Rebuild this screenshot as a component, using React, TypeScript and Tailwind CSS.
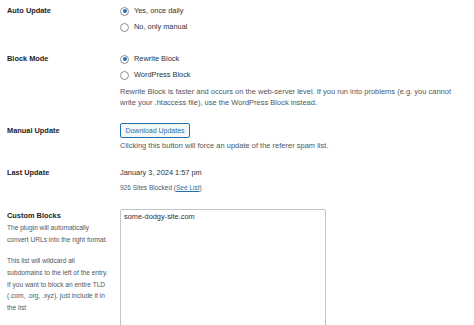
import React from "react";

const font = { fontFamily: '"Liberation Sans", Arial, sans-serif' };

function Radio({ label, checked }: { label: string; checked?: boolean }) {
  return (
    <label className="flex h-[16px] items-center gap-[5px] text-[7.4px] text-[#2c3338]">
      <span className="flex h-[9px] w-[9px] items-center justify-center rounded-full border border-[#8c8f94] bg-white">
        {checked && <span className="h-[4px] w-[4px] rounded-full bg-[#2271b1]" />}
      </span>
      {label}
    </label>
  );
}

function Row({
  label,
  children,
  className,
}: {
  label: React.ReactNode;
  children: React.ReactNode;
  className?: string;
}) {
  return (
    <div className={"flex text-[7.4px] " + (className ?? "")}>
      <div className="w-[120px] shrink-0 pl-[7px] pr-[10px]">{label}</div>
      <div className="w-[338px]">{children}</div>
    </div>
  );
}

const labelCls = "text-[7.4px] font-bold text-[#1d2327]";

export default function App() {
  return (
    <div className="h-[325px] w-[474px] overflow-hidden bg-white" style={font}>
      <Row className="pt-[3px]" label={<div className={"h-[16px] leading-[16px] " + labelCls}>Auto Update</div>}>
        <Radio label="Yes, once daily" checked />
        <Radio label="No, only manual" />
      </Row>

      <Row className="pt-[16px]" label={<div className={"h-[16px] leading-[16px] " + labelCls}>Block Mode</div>}>
        <Radio label="Rewrite Block" checked />
        <Radio label="WordPress Block" />
        <p className="mt-[3px] text-[7.5px] leading-[11px] text-[#50575e]">
          Rewrite Block is faster and occurs on the web-server level. If you run into problems (e.g. you cannot write
          your .htaccess file), use the WordPress Block instead.
        </p>
      </Row>

      <Row className="pt-[15px]" label={<div className={"h-[15px] leading-[15px] " + labelCls}>Manual Update</div>}>
        <button className="block h-[15px] w-[70px] rounded-[2px] border border-[#2271b1] bg-[#f6f7f7] text-[7px] leading-[13px] text-[#2271b1]">
          Download Updates
        </button>
        <p className="mt-[2px] text-[7.5px] leading-[11px] text-[#50575e]">
          Clicking this button will force an update of the referer spam list.
        </p>
      </Row>

      <Row className="pt-[16px]" label={<div className={"h-[11px] leading-[11px] " + labelCls}>Last Update</div>}>
        <div className="text-[7.4px] leading-[11px] text-[#2c3338]">January 3, 2024 1:57 pm</div>
        <div className="mt-[4px] text-[6.5px] leading-[12px] text-[#50575e]">
          926 Sites Blocked (
          <a href="#" className="text-[#2271b1] underline">
            See List
          </a>
          )
        </div>
      </Row>

      <Row
        className="pt-[15px]"
        label={
          <div>
            <div className={"mt-[1px] h-[12px] leading-[12px] " + labelCls}>Custom Blocks</div>
            <p className="text-[6.6px] leading-[11.8px] text-[#50575e]">
              The plugin will automatically convert URLs into the right format.
            </p>
            <p className="mt-[9.5px] text-[6.6px] leading-[11.8px] text-[#50575e]">
              This list will wildcard all subdomains to the left of the entry. If you want to block an entire TLD (.com,
              .org, .xyz), just include it in the list
            </p>
          </div>
        }
      >
        <textarea
          defaultValue="some-dodgy-site.com"
          className="block h-[140px] w-[206px] resize-none rounded-[2px] border border-[#c3c4c7] px-[3px] py-[1px] text-[7.4px] leading-[11px] text-[#2c3338] outline-none"
          style={font}
        />
      </Row>
    </div>
  );
}
